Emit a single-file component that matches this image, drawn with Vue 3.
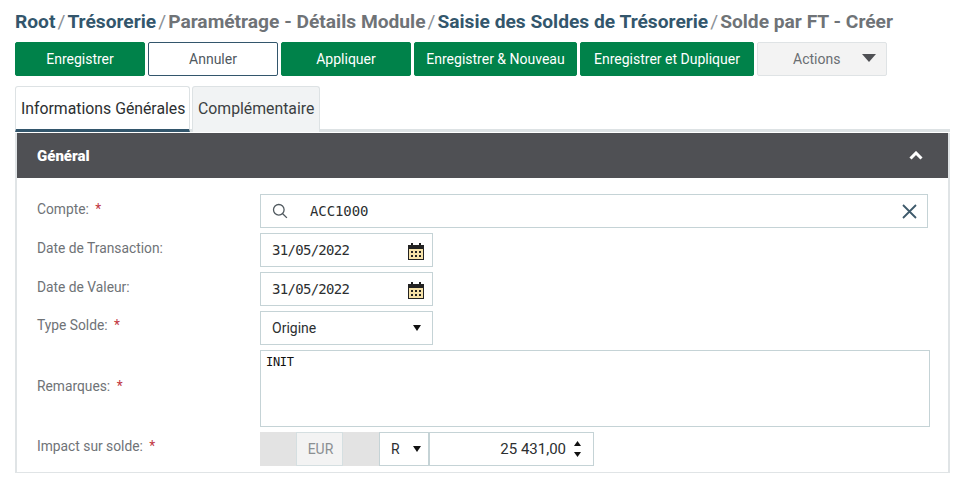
<template>
  <div class="page">
    <h1 class="crumbs">
      <template v-for="(c, i) in crumbs" :key="c.text">
        <span v-if="i" class="sep">/</span><span :class="c.strong ? 'strong' : 'soft'">{{ c.text }}</span>
      </template>
    </h1>

    <div class="toolbar">
      <button class="btn green w130">Enregistrer</button>
      <button class="btn outline w130">Annuler</button>
      <button class="btn green w130">Appliquer</button>
      <button class="btn green w163">Enregistrer &amp; Nouveau</button>
      <button class="btn green w174">Enregistrer et Dupliquer</button>
      <button class="btn grey w130">
        <span>Actions</span>
        <svg class="caret" width="14" height="8" viewBox="0 0 14 8"><path d="M0 0h14L7 8z" fill="#4f5054" /></svg>
      </button>
    </div>

    <div class="tabs">
      <div class="tab active">Informations Générales</div>
      <div class="tab second">Complémentaire</div>
    </div>

    <section class="panel">
      <header class="panel-head">
        <strong>Général</strong>
        <svg width="14" height="9" viewBox="0 0 14 9"><path d="M1.5 7.5 7 2l5.5 5.5" fill="none" stroke="#fff" stroke-width="3" /></svg>
      </header>

      <div class="form">
        <div class="row">
          <label>Compte: <i>*</i></label>
          <div class="field lookup">
            <svg class="search" width="16" height="16" viewBox="0 0 16 16" fill="none" stroke="#50595f" stroke-width="1.3">
              <circle cx="6.8" cy="6.8" r="5.3" /><path d="m10.7 10.7 4.2 4.2" />
            </svg>
            <span class="mono wide">ACC1000</span>
            <svg class="clear" width="15" height="15" viewBox="0 0 15 15" stroke="#3e5a6b" stroke-width="1.8"><path d="m1 1 13 13M14 1 1 14" /></svg>
          </div>
        </div>

        <div v-for="d in dates" :key="d" class="row">
          <label>{{ d }}:</label>
          <div class="field short">
            <span class="mono">31/05/2022</span>
            <svg class="cal" width="16" height="17" viewBox="0 0 16 17">
              <rect x="0.5" y="2.5" width="15" height="14" fill="#f6e2a8" stroke="#222" />
              <rect x="0" y="2" width="16" height="4" fill="#222" />
              <rect x="3" y="0" width="2" height="4" fill="#222" />
              <rect x="11" y="0" width="2" height="4" fill="#222" />
              <path d="M3 8h2v2H3zM7 8h2v2H7zM11 8h2v2h-2zM3 12h2v2H3zM7 12h2v2H7zM11 12h2v2h-2z" fill="#222" />
            </svg>
          </div>
        </div>

        <div class="row tight">
          <label>Type Solde: <i>*</i></label>
          <div class="field short">
            <span class="plain">Origine</span>
            <svg class="tri" width="8" height="6" viewBox="0 0 8 6"><path d="M0 0h8L4 6z" fill="#111" /></svg>
          </div>
        </div>

        <div class="row tight">
          <label>Remarques: <i>*</i></label>
          <div class="area">INIT</div>
        </div>

        <div class="row tight">
          <label>Impact sur solde: <i>*</i></label>
          <div class="impact">
            <div class="gap-cell"></div>
            <div class="cur">EUR</div>
            <div class="gap-cell"></div>
            <div class="sign">
              <span>R</span>
              <svg width="8" height="6" viewBox="0 0 8 6"><path d="M0 0h8L4 6z" fill="#111" /></svg>
            </div>
            <div class="amount">
              <span>25 431,00</span>
              <div class="spin">
                <svg width="7" height="5" viewBox="0 0 7 5"><path d="M0 5h7L3.5 0z" fill="#111" /></svg>
                <svg width="7" height="5" viewBox="0 0 7 5"><path d="M0 0h7L3.5 5z" fill="#111" /></svg>
              </div>
            </div>
          </div>
        </div>
      </div>
    </section>
  </div>
</template>

<script setup>
const crumbs = [
  { text: 'Root', strong: true },
  { text: 'Trésorerie', strong: true },
  { text: 'Paramétrage - Détails Module', strong: false },
  { text: 'Saisie des Soldes de Trésorerie', strong: true },
  { text: 'Solde par FT - Créer', strong: false }
]

const dates = ['Date de Transaction', 'Date de Valeur']
</script>

<style>
html, body {
  background: #fff;
}
</style>

<style scoped>
.page {
  width: 965px;
  height: 487px;
  box-sizing: border-box;
  padding: 12px 15px 0;
  overflow: hidden;
  font-family: Roboto, "Liberation Sans", sans-serif;
  font-size: 14px;
}

.crumbs {
  margin: 0;
  height: 20px;
  line-height: 20px;
  font-size: 19.2px;
  font-weight: 700;
  white-space: nowrap;
}

.strong {
  color: #33566c;
}

.soft {
  color: #6f7377;
}

.sep {
  margin: 0 2px;
  font-weight: 400;
  color: #8b9197;
}

.toolbar {
  display: flex;
  gap: 3px;
  margin-top: 10px;
}

.btn {
  height: 34px;
  box-sizing: border-box;
  border-radius: 2px;
  font: inherit;
  padding: 0;
  font-size: 14px;
}

.w130 { width: 130px; }
.w163 { width: 163px; }
.w174 { width: 174px; }

.green {
  background: #00824a;
  border: 1px solid #00824a;
  color: #fff;
}

.outline {
  background: #fff;
  border: 1px solid #33566c;
  color: #50595f;
}

.grey {
  display: flex;
  align-items: center;
  background: #f3f3f3;
  border: 1px solid #dfe3e5;
  color: #6a6e72;
  padding-left: 35px;
}

.caret {
  margin-left: 22px;
  margin-top: -3px;
}

.tabs {
  display: flex;
  gap: 2px;
  height: 46px;
  margin-top: 10px;
  border-bottom: 3px solid #dde2e4;
  box-sizing: border-box;
  width: 935px;
}

.tab {
  height: 46px;
  box-sizing: border-box;
  padding: 0 5px;
  line-height: 43px;
  font-size: 15.8px;
  color: #3b3f42;
  background: #f1f3f4;
  border: 1px solid #dde2e4;
  border-bottom: none;
  border-radius: 3px 3px 0 0;
  white-space: nowrap;
}

.tab.active {
  width: 175px;
  background: #fff;
  color: #2c2f31;
  border-bottom: 3px solid #33566c;
}

.tab.second {
  width: 128px;
}

.panel {
  width: 935px;
  height: 340px;
  box-sizing: border-box;
  margin-top: 1px;
  border: 2px solid #e0e4e6;
  border-top: none;
  border-bottom-width: 1px;
}

.panel-head {
  display: flex;
  justify-content: space-between;
  align-items: center;
  height: 45px;
  padding: 0 25px 0 20px;
  background: #4f5054;
  color: #fff;
  font-size: 15px;
}

.panel-head strong {
  font-weight: 900;
}

.form {
  padding: 16px 0 0 20px;
}

.row {
  display: flex;
  align-items: center;
  margin-bottom: 5px;
}

label {
  width: 223px;
  flex: none;
  margin-top: -4px;
  color: #6f7377;
  font-size: 13.8px;
}

label i {
  margin-left: 3px;
  font-style: normal;
  color: #c1373f;
}

.row.tight label {
  margin-top: -6px;
}

.field {
  display: flex;
  align-items: center;
  height: 34px;
  box-sizing: border-box;
  border: 1px solid #c5d3d6;
  padding: 0 11px;
  background: #fff;
}

.lookup {
  width: 668px;
}

.short {
  width: 173px;
  justify-content: space-between;
}

.short .cal {
  margin: 2px -3px 0 0;
}

.search {
  margin-right: 22px;
}

.mono {
  font-family: "DejaVu Sans Mono", monospace;
  font-size: 14px;
  letter-spacing: -0.7px;
  color: #2c2f31;
}

.mono.wide {
  letter-spacing: -0.1px;
}

.clear {
  margin-left: auto;
  margin-right: -1px;
}

.plain {
  color: #2c2f31;
}

.area {
  width: 670px;
  height: 77px;
  box-sizing: border-box;
  border: 1px solid #c5d3d6;
  padding: 4px 5px;
  font-family: "DejaVu Sans Mono", monospace;
  font-size: 12px;
  letter-spacing: -0.3px;
  color: #111;
}

.impact {
  display: flex;
  height: 34px;
}

.gap-cell {
  width: 36px;
  background: #e3e3e3;
}

.cur {
  width: 47px;
  box-sizing: border-box;
  border: 1px solid #d5dfe1;
  background: #f3f3f3;
  color: #8b8f92;
  line-height: 32px;
  text-align: center;
  padding-left: 2px;
}

.sign {
  display: flex;
  align-items: center;
  justify-content: space-between;
  width: 50px;
  box-sizing: border-box;
  border: 1px solid #c5d3d6;
  padding: 0 7px 0 11px;
  color: #2c2f31;
}

.amount {
  display: flex;
  align-items: center;
  justify-content: flex-end;
  width: 165px;
  box-sizing: border-box;
  border: 1px solid #c5d3d6;
  padding-right: 12px;
  color: #2c2f31;
  font-size: 15px;
}

.spin {
  display: flex;
  flex-direction: column;
  gap: 6px;
  margin-left: 8px;
}

.spin svg {
  display: block;
}
</style>
